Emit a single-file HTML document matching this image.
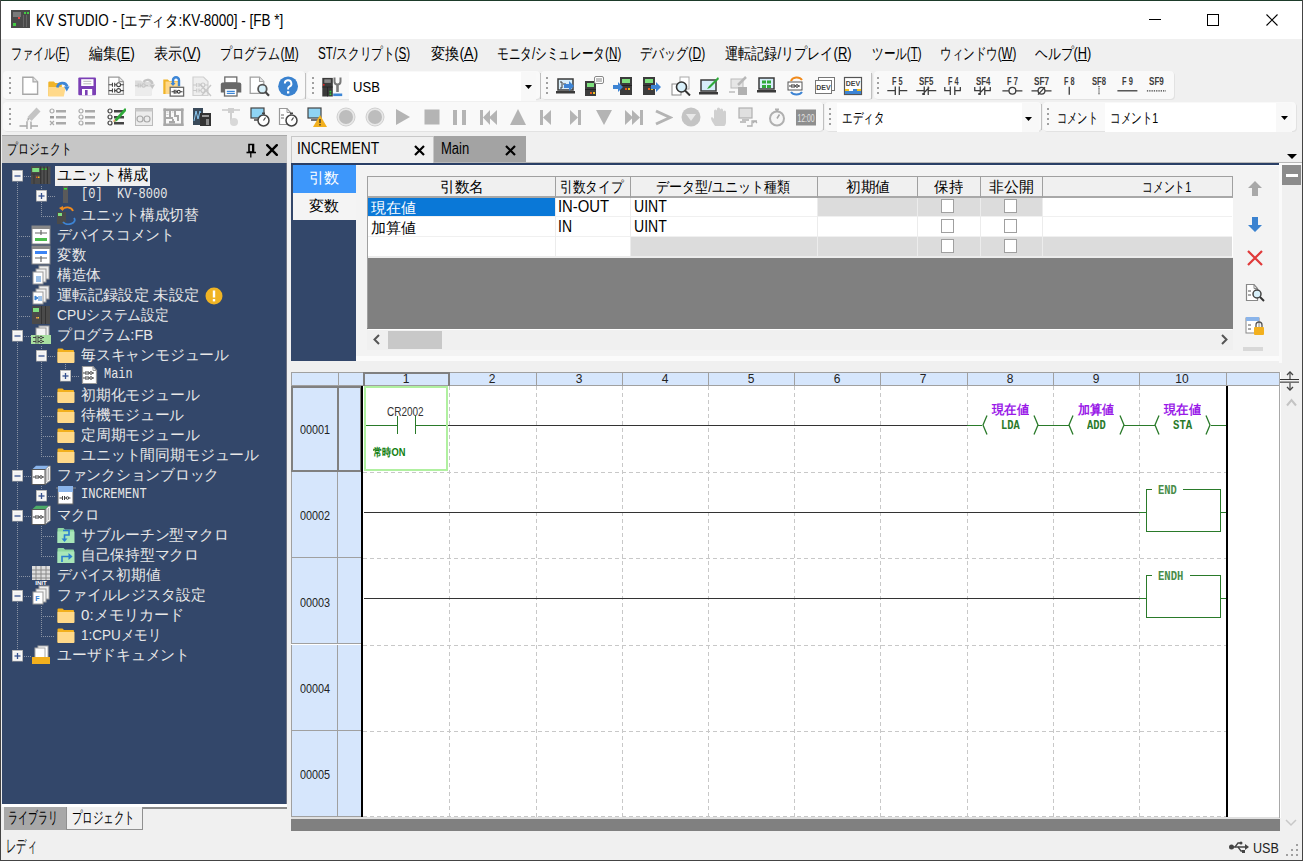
<!DOCTYPE html>
<html><head><meta charset="utf-8">
<style>
*{box-sizing:border-box;margin:0;padding:0}
html,body{width:1303px;height:861px;overflow:hidden;background:#f0f0f0;font-family:"Liberation Sans",sans-serif;color:#000}
.a{position:absolute}
.t{position:absolute;white-space:nowrap;line-height:1}
.ui{font-size:15px}
.tr{font-size:15px;color:#e6e6e6}
.m{font-family:"Liberation Mono",monospace}
</style></head><body>
<div class="a" style="left:1px;top:1px;width:1301px;height:38px;background:#fff"></div>
<svg class="a" style="left:11px;top:10px;" width="19" height="18" viewBox="0 0 19 18"><rect x="0" y="0" width="19" height="18" fill="#4a4a4a"/><rect x="2" y="2" width="8" height="5" fill="#7a7a7a"/><rect x="13" y="2" width="2" height="2" fill="#4c4"/><rect x="16" y="2" width="2" height="2" fill="#4c4"/><rect x="7" y="7" width="2" height="2" fill="#e44"/><rect x="2" y="13" width="3" height="3" fill="#4c4"/><rect x="12" y="5" width="1" height="12" fill="#666"/><rect x="15" y="5" width="1" height="12" fill="#666"/></svg>
<div class="t" id="f1" style="left:36px;top:12.5px;font-size:16px;color:#000;transform:scaleX(0.8430);transform-origin:0 0;">KV STUDIO - [エディタ:KV-8000] - [FB *]</div>
<div class="a" style="left:1149px;top:19px;width:12px;height:1px;background:#000"></div>
<div class="a" style="left:1207px;top:14px;width:12px;height:12px;border:1px solid #000"></div>
<svg class="a" style="left:1266px;top:14px;" width="12" height="12" viewBox="0 0 12 12"><path d="M0.5 0.5L11.5 11.5M11.5 0.5L0.5 11.5" stroke="#000" stroke-width="1.1"/></svg>
<div class="t" id="f2" style="left:11px;top:46px;font-size:16px;transform:scaleX(0.6905);transform-origin:0 0;">ファイル(<u>F</u>)</div>
<div class="t" id="f3" style="left:89px;top:46px;font-size:16px;transform:scaleX(0.8585);transform-origin:0 0;">編集(<u>E</u>)</div>
<div class="t" id="f4" style="left:154px;top:46px;font-size:16px;transform:scaleX(0.8792);transform-origin:0 0;">表示(<u>V</u>)</div>
<div class="t" id="f5" style="left:220px;top:46px;font-size:16px;transform:scaleX(0.7567);transform-origin:0 0;">プログラム(<u>M</u>)</div>
<div class="t" id="f6" style="left:318px;top:46px;font-size:16px;transform:scaleX(0.7302);transform-origin:0 0;">ST/スクリプト(<u>S</u>)</div>
<div class="t" id="f7" style="left:431px;top:46px;font-size:16px;transform:scaleX(0.8868);transform-origin:0 0;">変換(<u>A</u>)</div>
<div class="t" id="f8" style="left:497px;top:46px;font-size:16px;transform:scaleX(0.7281);transform-origin:0 0;">モニタ/シミュレータ(<u>N</u>)</div>
<div class="t" id="f9" style="left:640px;top:46px;font-size:16px;transform:scaleX(0.7558);transform-origin:0 0;">デバッグ(<u>D</u>)</div>
<div class="t" id="f10" style="left:725px;top:46px;font-size:16px;transform:scaleX(0.8194);transform-origin:0 0;">運転記録/リプレイ(<u>R</u>)</div>
<div class="t" id="f11" style="left:872px;top:46px;font-size:16px;transform:scaleX(0.7250);transform-origin:0 0;">ツール(<u>T</u>)</div>
<div class="t" id="f12" style="left:940px;top:46px;font-size:16px;transform:scaleX(0.7217);transform-origin:0 0;">ウィンドウ(<u>W</u>)</div>
<div class="t" id="f13" style="left:1035px;top:46px;font-size:16px;transform:scaleX(0.8000);transform-origin:0 0;">ヘルプ(<u>H</u>)</div>
<div class="a" style="left:3px;top:71px;width:302px;height:28px;background:#f9f9f9;border-radius:4px;box-shadow:1px 1px 0 #e2e2e2"></div>
<div class="a" style="left:9px;top:77px;width:2px;height:2px;background:#a0a0a0"></div>
<div class="a" style="left:9px;top:82px;width:2px;height:2px;background:#a0a0a0"></div>
<div class="a" style="left:9px;top:87px;width:2px;height:2px;background:#a0a0a0"></div>
<div class="a" style="left:9px;top:92px;width:2px;height:2px;background:#a0a0a0"></div>
<div class="a" style="left:307px;top:71px;width:233px;height:28px;background:#f9f9f9;border-radius:4px;box-shadow:1px 1px 0 #e2e2e2"></div>
<div class="a" style="left:312px;top:77px;width:2px;height:2px;background:#a0a0a0"></div>
<div class="a" style="left:312px;top:82px;width:2px;height:2px;background:#a0a0a0"></div>
<div class="a" style="left:312px;top:87px;width:2px;height:2px;background:#a0a0a0"></div>
<div class="a" style="left:312px;top:92px;width:2px;height:2px;background:#a0a0a0"></div>
<div class="a" style="left:541px;top:71px;width:331px;height:28px;background:#f9f9f9;border-radius:4px;box-shadow:1px 1px 0 #e2e2e2"></div>
<div class="a" style="left:546px;top:77px;width:2px;height:2px;background:#a0a0a0"></div>
<div class="a" style="left:546px;top:82px;width:2px;height:2px;background:#a0a0a0"></div>
<div class="a" style="left:546px;top:87px;width:2px;height:2px;background:#a0a0a0"></div>
<div class="a" style="left:546px;top:92px;width:2px;height:2px;background:#a0a0a0"></div>
<div class="a" style="left:874px;top:71px;width:300px;height:28px;background:#f9f9f9;border-radius:4px;box-shadow:1px 1px 0 #e2e2e2"></div>
<div class="a" style="left:877px;top:77px;width:2px;height:2px;background:#a0a0a0"></div>
<div class="a" style="left:877px;top:82px;width:2px;height:2px;background:#a0a0a0"></div>
<div class="a" style="left:877px;top:87px;width:2px;height:2px;background:#a0a0a0"></div>
<div class="a" style="left:877px;top:92px;width:2px;height:2px;background:#a0a0a0"></div>
<div class="a" style="left:3px;top:102px;width:820px;height:29px;background:#f9f9f9;border-radius:4px;box-shadow:1px 1px 0 #e2e2e2"></div>
<div class="a" style="left:9px;top:108px;width:2px;height:2px;background:#a0a0a0"></div>
<div class="a" style="left:9px;top:113px;width:2px;height:2px;background:#a0a0a0"></div>
<div class="a" style="left:9px;top:118px;width:2px;height:2px;background:#a0a0a0"></div>
<div class="a" style="left:9px;top:123px;width:2px;height:2px;background:#a0a0a0"></div>
<div class="a" style="left:825px;top:102px;width:216px;height:29px;background:#f9f9f9;border-radius:4px;box-shadow:1px 1px 0 #e2e2e2"></div>
<div class="a" style="left:829px;top:108px;width:2px;height:2px;background:#a0a0a0"></div>
<div class="a" style="left:829px;top:113px;width:2px;height:2px;background:#a0a0a0"></div>
<div class="a" style="left:829px;top:118px;width:2px;height:2px;background:#a0a0a0"></div>
<div class="a" style="left:829px;top:123px;width:2px;height:2px;background:#a0a0a0"></div>
<div class="a" style="left:1043px;top:102px;width:253px;height:29px;background:#f9f9f9;border-radius:4px;box-shadow:1px 1px 0 #e2e2e2"></div>
<div class="a" style="left:1047px;top:108px;width:2px;height:2px;background:#a0a0a0"></div>
<div class="a" style="left:1047px;top:113px;width:2px;height:2px;background:#a0a0a0"></div>
<div class="a" style="left:1047px;top:118px;width:2px;height:2px;background:#a0a0a0"></div>
<div class="a" style="left:1047px;top:123px;width:2px;height:2px;background:#a0a0a0"></div>
<div class="a" style="left:305px;top:73px;width:1px;height:26px;background:#c0c0c0"></div>
<div class="a" style="left:540px;top:73px;width:1px;height:26px;background:#c0c0c0"></div>
<div class="a" style="left:871px;top:73px;width:1px;height:26px;background:#c0c0c0"></div>
<div class="a" style="left:823px;top:104px;width:1px;height:26px;background:#c0c0c0"></div>
<div class="a" style="left:1041px;top:104px;width:1px;height:26px;background:#c0c0c0"></div>
<div class="a" style="left:349px;top:72px;width:187px;height:29px;background:#fff"></div>
<div class="a" style="left:521px;top:72px;width:15px;height:29px;background:#f8f8f8"></div>
<svg class="a" style="left:524.5px;top:85px;" width="7" height="4" viewBox="0 0 7 4"><path d="M0 0H7L3.5 4Z" fill="#000"/></svg>
<div class="t" id="f14" style="left:353px;top:79px;font-size:15px;transform:scaleX(0.8710);transform-origin:0 0;">USB</div>
<div class="a" style="left:837px;top:103px;width:202px;height:29px;background:#fff"></div>
<div class="a" style="left:1022px;top:103px;width:17px;height:29px;background:#f8f8f8"></div>
<svg class="a" style="left:1025px;top:117px;" width="7" height="4" viewBox="0 0 7 4"><path d="M0 0H7L3.5 4Z" fill="#000"/></svg>
<div class="t" id="f15" style="left:842px;top:110px;font-size:15px;transform:scaleX(0.7000);transform-origin:0 0;">エディタ</div>
<div class="t" id="f16" style="left:1057px;top:110px;font-size:15px;transform:scaleX(0.6833);transform-origin:0 0;">コメント</div>
<div class="a" style="left:1105px;top:103px;width:187px;height:29px;background:#fff"></div>
<div class="a" style="left:1276px;top:103px;width:16px;height:29px;background:#f8f8f8"></div>
<svg class="a" style="left:1280.5px;top:116px;" width="7" height="4" viewBox="0 0 7 4"><path d="M0 0H7L3.5 4Z" fill="#000"/></svg>
<div class="t" id="f17" style="left:1110px;top:110px;font-size:15px;transform:scaleX(0.7059);transform-origin:0 0;">コメント1</div>
<svg class="a" style="left:20px;top:76px;" width="22" height="21" viewBox="0 0 22 21"><path d="M2.8 1.2H13L17.6 5.8V18.2H2.8Z" fill="#fff" stroke="#a8a8a8" stroke-width="1.4"/><path d="M13 1.2V5.8H17.6" fill="#e4e4e4" stroke="#a8a8a8" stroke-width="1.2"/></svg>
<svg class="a" style="left:47px;top:76px;" width="24" height="22" viewBox="0 0 24 22"><path d="M1.3 6.5q0-1 1-1h4.5l1.5 1.5h6.5v13H1.3z" fill="#f0b429"/><path d="M1.3 11h17.5l-2 9.5H1.3z" fill="#ffd98a"/><path d="M10.3 11.5a5.2 5.2 0 0 1 10 -1" stroke="#3d86d6" stroke-width="2.6" fill="none"/><path d="M17 10.5h5.6l-2.8 5z" fill="#3d86d6"/></svg>
<svg class="a" style="left:77px;top:76px;" width="22" height="21" viewBox="0 0 22 21"><rect x="1.3" y="1.5" width="17.7" height="17.7" rx="1" fill="#7b3fb5"/><rect x="4.2" y="3.2" width="12.3" height="6.8" fill="#fff"/><path d="M6.3 5.3h8M6.3 7.8h8" stroke="#b8b8b8" stroke-width="1"/><rect x="5" y="13" width="10.2" height="6.2" fill="#fff"/><rect x="8" y="14" width="2.6" height="5.2" fill="#7b3fb5"/></svg>
<svg class="a" style="left:107px;top:76px;" width="22" height="21" viewBox="0 0 22 21"><path d="M1.7 1.2H12L16.4 5.6V18.3H1.7Z" fill="#fff" stroke="#9a9a9a" stroke-width="1.3"/><path d="M12 1.2V5.6H16.4" fill="#e8e8e8" stroke="#9a9a9a" stroke-width="1.1"/><path d="M1.7 8.7h3.75M5.45 6.699999999999999v4M7.7 6.699999999999999v4M7.7 8.7h1.7999999999999998M13.7 8.7h3.0" stroke="#444" stroke-width="1.1" fill="none"/><circle cx="11.6" cy="8.7" r="1.9500000000000002" stroke="#444" stroke-width="1.1" fill="none"/><path d="M1.7 14.6h3.75M5.45 12.6v4M7.7 12.6v4M7.7 14.6h1.7999999999999998M13.7 14.6h3.0" stroke="#444" stroke-width="1.1" fill="none"/><circle cx="11.6" cy="14.6" r="1.9500000000000002" stroke="#444" stroke-width="1.1" fill="none"/></svg>
<svg class="a" style="left:134px;top:76px;" width="22" height="21" viewBox="0 0 22 21"><path d="M1 4.5h6l1.5 1.5h9v13.5H1z" fill="#dcdcdc"/><path d="M1 11h18l-2 8.5H1z" fill="#ececec"/><path d="M1 9.5h3.25M4.25 7.5v4M6.2 7.5v4M6.2 9.5h1.56M11.4 9.5h2.6" stroke="#c4c4c4" stroke-width="1.1" fill="none"/><circle cx="9.58" cy="9.5" r="1.69" stroke="#c4c4c4" stroke-width="1.1" fill="none"/><path d="M9.5 6a5 5 0 0 1 9 2" stroke="#c4c4c4" stroke-width="2.4" fill="none"/><path d="M15.5 8.5h5.5l-2.7 4.5z" fill="#c4c4c4"/></svg>
<svg class="a" style="left:162px;top:76px;" width="23" height="21" viewBox="0 0 23 21"><path d="M1.3 3.5h4.5l1.5 1.5h10.5v13H1.3z" fill="#f0b429"/><path d="M3.5 5.5h14.5v12.5H3.5z" fill="#ffd98a"/><path d="M11 8.5V4.2a3 3 0 0 1 6 0v6" stroke="#3d86d6" stroke-width="2.4" fill="none"/><path d="M8.5 7l2.5 3 2.5-3z" fill="#3d86d6"/><rect x="8.2" y="11.3" width="13.4" height="8.8" fill="#fff" stroke="#6a6a6a" stroke-width="1.3"/><path d="M9.5 15.7h2.75M12.25 13.7v4M13.9 13.7v4M13.9 15.7h1.3199999999999998M18.3 15.7h2.2" stroke="#333" stroke-width="1.1" fill="none"/><circle cx="16.76" cy="15.7" r="1.4300000000000002" stroke="#333" stroke-width="1.1" fill="none"/></svg>
<svg class="a" style="left:192px;top:76px;" width="22" height="21" viewBox="0 0 22 21"><path d="M1 1H11.5L16 5.5V19.5H1Z" fill="#eeeeee" stroke="#d0d0d0" stroke-width="1.2"/><path d="M1 9h3.75M4.75 7v4M7.0 7v4M7.0 9h1.7999999999999998M13.0 9h3.0" stroke="#c8c8c8" stroke-width="1.1" fill="none"/><circle cx="10.9" cy="9" r="1.9500000000000002" stroke="#c8c8c8" stroke-width="1.1" fill="none"/><path d="M1 14.5h3.75M4.75 12.5v4M7.0 12.5v4M7.0 14.5h1.7999999999999998M13.0 14.5h3.0" stroke="#c8c8c8" stroke-width="1.1" fill="none"/><circle cx="10.9" cy="14.5" r="1.9500000000000002" stroke="#c8c8c8" stroke-width="1.1" fill="none"/><path d="M8 8l11 12M19 9l-9 10" stroke="#c8c8c8" stroke-width="1.4"/></svg>
<svg class="a" style="left:220px;top:76px;" width="23" height="21" viewBox="0 0 23 21"><rect x="4.8" y="1" width="12" height="6" fill="#fff" stroke="#6a6a6a" stroke-width="1.3"/><path d="M0.8 8.5q0-2 2-2h16.5q2 0 2 2V16.5H0.8z" fill="#686868"/><rect x="4.5" y="12.5" width="12.5" height="7.5" fill="#fff" stroke="#6a6a6a" stroke-width="1.3"/><path d="M6.8 15.3h8M6.8 17.3h8" stroke="#3d86d6" stroke-width="1.2"/></svg>
<svg class="a" style="left:249px;top:76px;" width="22" height="21" viewBox="0 0 22 21"><path d="M1.2 1.2H10.5L14.8 5.5V17.3H1.2Z" fill="#fff" stroke="#a0a0a0" stroke-width="1.3"/><path d="M10.5 1.2V5.5H14.8" fill="#e8e8e8" stroke="#a0a0a0" stroke-width="1.1"/><circle cx="13.4" cy="12.9" r="4.3" fill="#d6f0fa" stroke="#555" stroke-width="1.8"/><path d="M16.4 16l3.6 3.8" stroke="#444" stroke-width="2.2"/></svg>
<svg class="a" style="left:278px;top:76px;" width="21" height="21" viewBox="0 0 21 21"><circle cx="10.1" cy="10.3" r="9.9" fill="#3a82cf"/><path d="M6.8 7.6a3.3 3.3 0 1 1 4.6 3c-1 .5-1.3 1-1.3 2.2v.8" stroke="#fff" stroke-width="1.9" fill="none"/><rect x="9" y="15.2" width="2.3" height="2.3" fill="#fff"/></svg>
<svg class="a" style="left:322px;top:76px;" width="22" height="21" viewBox="0 0 22 21"><rect x="0.3" y="1.9" width="10.5" height="18.6" fill="#3a3a3a"/><rect x="2.3" y="3.3" width="6.5" height="3.6" fill="#8a8a8a"/><rect x="1" y="8" width="1.6" height="1.6" fill="#e02020"/><path d="M0.3 11h10.5M5.5 11v9.5" stroke="#222" stroke-width="0.8"/><rect x="7.5" y="14.8" width="1.8" height="1.6" fill="#3c3"/><rect x="7.5" y="17.5" width="1.8" height="1.6" fill="#3c3"/><path d="M12.5 1.5v4a3 3 0 0 0 6 0v-4" stroke="#7a7a7a" stroke-width="2" fill="none"/><path d="M15.5 8v8" stroke="#7a7a7a" stroke-width="2.6"/><rect x="11.2" y="17.5" width="9" height="2.6" fill="#3d86d6"/></svg>
<svg class="a" style="left:556px;top:76px;" width="20" height="20" viewBox="0 0 20 20"><rect x="2" y="3" width="15" height="11" fill="#d7eefa" stroke="#3a3a3a" stroke-width="1.5"/><rect x="0" y="15" width="19" height="2.5" fill="#3a3a3a"/><path d="M4 6h2v6H4M7 8h3" stroke="#3a3a3a" stroke-width="1" fill="none"/><path d="M8 8h5v-3l5 5-5 5v-3h-5z" fill="#3d84d4"/></svg>
<svg class="a" style="left:584px;top:76px;" width="20" height="20" viewBox="0 0 20 20"><rect x="1" y="5" width="11" height="15" fill="#3c3c3c"/><rect x="3" y="7" width="7" height="4" fill="#7ee07e"/><rect x="6" y="16" width="2" height="2" fill="#e85a1c"/><rect x="9" y="16" width="2" height="2" fill="#f0c020"/><rect x="1" y="13" width="11" height="1" fill="#222"/><rect x="10.5" y="0.5" width="9" height="7" rx="1.5" fill="#fff" stroke="#888"/><path d="M12 3h6M12 5h6" stroke="#888"/></svg>
<svg class="a" style="left:613px;top:76px;" width="20" height="20" viewBox="0 0 20 20"><rect x="7" y="1" width="12" height="18" fill="#3c3c3c"/><rect x="9" y="3" width="8" height="4" fill="#7ee07e"/><rect x="12" y="12" width="2" height="2" fill="#e85a1c"/><rect x="15" y="12" width="2" height="2" fill="#f0c020"/><rect x="7" y="9" width="12" height="1" fill="#222"/><path d="M0 9h5v-3l5 5-5 5v-3h-5z" fill="#3d84d4"/></svg>
<svg class="a" style="left:642px;top:76px;" width="20" height="20" viewBox="0 0 20 20"><rect x="1" y="1" width="12" height="18" fill="#3c3c3c"/><rect x="3" y="3" width="8" height="4" fill="#7ee07e"/><rect x="6" y="12" width="2" height="2" fill="#e85a1c"/><rect x="9" y="12" width="2" height="2" fill="#f0c020"/><rect x="1" y="9" width="12" height="1" fill="#222"/><path d="M9 9h5v-3l5 5-5 5v-3h-5z" fill="#3d84d4"/></svg>
<svg class="a" style="left:671px;top:76px;" width="20" height="20" viewBox="0 0 20 20"><rect x="9" y="1" width="9" height="12" fill="#fff" stroke="#aaa"/><rect x="1" y="8" width="9" height="11" fill="#fff" stroke="#888"/><circle cx="10.5" cy="11" r="5" fill="#d8f0fa" stroke="#333" stroke-width="1.6"/><path d="M14 14.5l5 5" stroke="#333" stroke-width="2"/></svg>
<svg class="a" style="left:699px;top:76px;" width="20" height="20" viewBox="0 0 20 20"><rect x="2" y="4" width="15" height="11" fill="#d7eefa" stroke="#3a3a3a" stroke-width="1.5"/><rect x="0" y="16" width="19" height="2.5" fill="#3a3a3a"/><path d="M19 1l-9 9-2 3 3-1 9-9z" fill="#2faa3a"/></svg>
<svg class="a" style="left:728px;top:76px;" width="20" height="20" viewBox="0 0 20 20"><rect x="3" y="3" width="12" height="9" fill="#e6e6e6" stroke="#bbb"/><rect x="10" y="11" width="9" height="8" fill="#b0b0b0"/><path d="M18 1l-8 8" stroke="#b8b8b8" stroke-width="2.5"/><path d="M1 16h6" stroke="#bbb" stroke-width="1.5"/></svg>
<svg class="a" style="left:757px;top:76px;" width="20" height="20" viewBox="0 0 20 20"><rect x="2" y="2" width="15" height="11" fill="#d7eefa" stroke="#3a3a3a" stroke-width="1.5"/><rect x="0" y="14" width="19" height="2.5" fill="#3a3a3a"/><rect x="5" y="4.5" width="4" height="3" fill="#2faa3a"/><rect x="10" y="4.5" width="4" height="3" fill="#2faa3a"/><rect x="5" y="9" width="4" height="3" fill="#2faa3a"/><rect x="10" y="9" width="4" height="3" fill="#2faa3a"/></svg>
<svg class="a" style="left:786px;top:76px;" width="20" height="20" viewBox="0 0 20 20"><rect x="2" y="6" width="14" height="8" fill="#fff" stroke="#555"/><path d="M3 10h3M6 8v4M8 8v4M8 10h2M12 10h2" stroke="#333" stroke-width="1" fill="none"/><circle cx="11" cy="10" r="1.3" stroke="#333" fill="none"/><path d="M5 5a6 5 0 0 1 11 -1" stroke="#f08a1c" stroke-width="2" fill="none"/><path d="M5 16a6 4 0 0 0 11 0" stroke="#3d84d4" stroke-width="2" fill="none"/></svg>
<svg class="a" style="left:815px;top:76px;" width="20" height="20" viewBox="0 0 20 20"><rect x="3.5" y="1.5" width="16" height="13" fill="#fff" stroke="#777"/><rect x="0.5" y="4.5" width="16" height="13" fill="#fff" stroke="#777"/><text x="8.5" y="14" font-size="7" text-anchor="middle" fill="#444" font-weight="bold" font-family="Liberation Sans">DEV</text></svg>
<svg class="a" style="left:843px;top:76px;" width="20" height="20" viewBox="0 0 20 20"><rect x="1.5" y="1.5" width="17" height="17" fill="#fff" stroke="#555" stroke-width="1.2"/><text x="10" y="10" font-size="7" text-anchor="middle" fill="#444" font-weight="bold" font-family="Liberation Sans">DEV</text><path d="M2 13h4v2h4v-2h4v2h4v3H2z" fill="#3d84d4"/><path d="M2 13h4v2H2zM14 13h4v2h-4z" fill="#f2c01e"/></svg>
<svg class="a" style="left:880px;top:76px;" width="34" height="20" viewBox="0 0 34 20"><text x="12" y="8.8" font-size="11.5" font-weight="bold" fill="#3c3c3c" font-family="Liberation Sans" textLength="10.6" lengthAdjust="spacingAndGlyphs">F 5</text><path d="M7.300000000000001 14.7h8M15.3 10.6v8.4M19.3 10.6v8.4M19.3 14.7h8" stroke="#3c3c3c" stroke-width="1.3" fill="none"/></svg>
<svg class="a" style="left:907px;top:76px;" width="34" height="20" viewBox="0 0 34 20"><text x="12" y="8.8" font-size="11.5" font-weight="bold" fill="#3c3c3c" font-family="Liberation Sans" textLength="14.5" lengthAdjust="spacingAndGlyphs">SF5</text><path d="M9.25 14.7h8M17.25 10.6v8.4M21.25 10.6v8.4M21.25 14.7h8M15.25 18.5l7-7" stroke="#3c3c3c" stroke-width="1.3" fill="none"/></svg>
<svg class="a" style="left:936px;top:76px;" width="34" height="20" viewBox="0 0 34 20"><text x="12" y="8.8" font-size="11.5" font-weight="bold" fill="#3c3c3c" font-family="Liberation Sans" textLength="10.6" lengthAdjust="spacingAndGlyphs">F 4</text><path d="M8.8 11v3.7h5.5M14.3 10.6v8.4M18.8 10.6v8.4M18.8 14.7h5.5v-3.7" stroke="#3c3c3c" stroke-width="1.3" fill="none"/></svg>
<svg class="a" style="left:964px;top:76px;" width="34" height="20" viewBox="0 0 34 20"><text x="12" y="8.8" font-size="11.5" font-weight="bold" fill="#3c3c3c" font-family="Liberation Sans" textLength="14.5" lengthAdjust="spacingAndGlyphs">SF4</text><path d="M10.75 11v3.7h5.5M16.25 10.6v8.4M20.75 10.6v8.4M20.75 14.7h5.5v-3.7M14.25 18.5l7-7" stroke="#3c3c3c" stroke-width="1.3" fill="none"/></svg>
<svg class="a" style="left:995px;top:76px;" width="34" height="20" viewBox="0 0 34 20"><text x="12" y="8.8" font-size="11.5" font-weight="bold" fill="#3c3c3c" font-family="Liberation Sans" textLength="10.8" lengthAdjust="spacingAndGlyphs">F 7</text><path d="M7.399999999999999 14.8h6.5M20.9 14.8h6.5" stroke="#3c3c3c" stroke-width="1.3" fill="none"/><circle cx="17.4" cy="14.8" r="3.4" stroke="#3c3c3c" stroke-width="1.3" fill="none"/></svg>
<svg class="a" style="left:1022px;top:76px;" width="34" height="20" viewBox="0 0 34 20"><text x="12" y="8.8" font-size="11.5" font-weight="bold" fill="#3c3c3c" font-family="Liberation Sans" textLength="15" lengthAdjust="spacingAndGlyphs">SF7</text><path d="M9.5 14.8h6.5M23.0 14.8h6.5M16.0 18.6l7-7.5" stroke="#3c3c3c" stroke-width="1.3" fill="none"/><circle cx="19.5" cy="14.8" r="3.4" stroke="#3c3c3c" stroke-width="1.3" fill="none"/></svg>
<svg class="a" style="left:1052px;top:76px;" width="34" height="20" viewBox="0 0 34 20"><text x="12" y="8.8" font-size="11.5" font-weight="bold" fill="#3c3c3c" font-family="Liberation Sans" textLength="10.5" lengthAdjust="spacingAndGlyphs">F 8</text><path d="M17.25 10.8v8" stroke="#3c3c3c" stroke-width="1.3" fill="none"/></svg>
<svg class="a" style="left:1080px;top:76px;" width="34" height="20" viewBox="0 0 34 20"><text x="12" y="8.8" font-size="11.5" font-weight="bold" fill="#3c3c3c" font-family="Liberation Sans" textLength="14" lengthAdjust="spacingAndGlyphs">SF8</text><path d="M19.0 10v9" stroke="#3c3c3c" stroke-width="1.3" stroke-dasharray="1.2 1"/></svg>
<svg class="a" style="left:1110px;top:76px;" width="34" height="20" viewBox="0 0 34 20"><text x="12" y="8.8" font-size="11.5" font-weight="bold" fill="#3c3c3c" font-family="Liberation Sans" textLength="10.8" lengthAdjust="spacingAndGlyphs">F 9</text><path d="M7.399999999999999 14.8h20" stroke="#3c3c3c" stroke-width="1.3" fill="none"/></svg>
<svg class="a" style="left:1137px;top:76px;" width="34" height="20" viewBox="0 0 34 20"><text x="12" y="8.8" font-size="11.5" font-weight="bold" fill="#3c3c3c" font-family="Liberation Sans" textLength="14.8" lengthAdjust="spacingAndGlyphs">SF9</text><path d="M9.899999999999999 14.8h19" stroke="#3c3c3c" stroke-width="1.3" stroke-dasharray="1.3 1"/></svg>
<svg class="a" style="left:18px;top:106px;" width="23" height="23" viewBox="0 0 23 23"><path d="M20.5 3.5l-9 9.5" stroke="#c4c4c4" stroke-width="5.5" stroke-linecap="butt"/><path d="M11.8 12.8l-3.3 3.6 1.2-4.6z" fill="#a8a8a8"/><path d="M8.5 13l3 3" stroke="#e8e8e8" stroke-width="1"/><path d="M1.5 20h7.5M9 15.5v9M13 15.5v9M13 20h7" stroke="#a8a8a8" stroke-width="1.4"/></svg>
<svg class="a" style="left:48px;top:107px;" width="20" height="20" viewBox="0 0 20 20"><circle cx="4" cy="4" r="2" fill="none" stroke="#aaa" stroke-width="1.2"/><rect x="8" y="3" width="10" height="2.5" fill="#aaa"/><rect x="2" y="9" width="4" height="2.5" fill="#999"/><rect x="8" y="9" width="10" height="2.5" fill="#aaa"/><path d="M2 14l4 4M6 14l-4 4" stroke="#aaa" stroke-width="1.2"/><rect x="8" y="15" width="10" height="2.5" fill="#aaa"/></svg>
<svg class="a" style="left:77px;top:107px;" width="20" height="20" viewBox="0 0 20 20"><circle cx="4" cy="4" r="2" fill="none" stroke="#aaa" stroke-width="1.2"/><rect x="8" y="3" width="10" height="2.5" fill="#aaa"/><circle cx="4" cy="10" r="2" fill="none" stroke="#aaa" stroke-width="1.2"/><rect x="8" y="9" width="10" height="2.5" fill="#aaa"/><circle cx="4" cy="16" r="2" fill="none" stroke="#aaa" stroke-width="1.2"/><rect x="8" y="15" width="10" height="2.5" fill="#aaa"/></svg>
<svg class="a" style="left:106px;top:107px;" width="20" height="20" viewBox="0 0 20 20"><circle cx="4" cy="4" r="2" fill="none" stroke="#444" stroke-width="1.2"/><rect x="8" y="3" width="10" height="2.5" fill="#444"/><circle cx="4" cy="10" r="2" fill="none" stroke="#444" stroke-width="1.2"/><rect x="8" y="9" width="10" height="2.5" fill="#444"/><circle cx="4" cy="16" r="2" fill="none" stroke="#444" stroke-width="1.2"/><rect x="8" y="15" width="10" height="2.5" fill="#444"/><path d="M19 1l2 2-10 11-3 1 1-3z" fill="#2faa3a"/><path d="M8 12l-1 3 3-1z" fill="#e8a070"/></svg>
<svg class="a" style="left:134px;top:107px;" width="20" height="20" viewBox="0 0 20 20"><rect x="1.5" y="1.5" width="17" height="17" fill="#ececec" stroke="#bbb"/><rect x="1.5" y="1.5" width="17" height="3" fill="#c8c8c8"/><circle cx="6" cy="12" r="3" fill="none" stroke="#aaa" stroke-width="1.2"/><circle cx="13" cy="12" r="3" fill="none" stroke="#aaa" stroke-width="1.2"/></svg>
<svg class="a" style="left:163px;top:108px;" width="22" height="20" viewBox="0 0 22 20"><g fill="#a8a8a8"><rect x="0.5" y="0.5" width="20" height="2.5"/><rect x="0.5" y="15.5" width="20" height="2.5"/><rect x="0.5" y="0.5" width="2.5" height="17.5"/><rect x="18" y="0.5" width="2.5" height="17.5"/><rect x="6" y="3" width="2" height="6"/><rect x="11" y="3" width="2" height="4"/><rect x="3" y="9" width="7" height="2"/><rect x="11" y="7" width="5" height="2"/><rect x="14" y="9" width="2" height="4"/><rect x="6" y="13" width="6" height="2.5"/><rect x="9" y="11" width="2" height="2"/></g><path d="M3.5 4h2M3.5 6.5h2M9 4h1.5" stroke="#c8c8c8"/></svg>
<svg class="a" style="left:192px;top:107px;" width="20" height="20" viewBox="0 0 20 20"><rect x="1" y="1" width="10" height="17" fill="#3a4a5a"/><path d="M2 14l2-10 2 8 2-8 2 10" stroke="#8ac8f0" fill="none"/><rect x="8" y="6" width="11" height="13" fill="#333"/><rect x="10" y="8" width="7" height="2" fill="#999"/><rect x="14" y="12" width="3" height="6" fill="#888"/></svg>
<svg class="a" style="left:221px;top:107px;" width="20" height="20" viewBox="0 0 20 20"><path d="M1 3h18" stroke="#c8c8c8" stroke-width="1.5"/><rect x="7" y="1" width="6" height="5" fill="#d0d0d0"/><path d="M10 6v8" stroke="#d0d0d0" stroke-width="2"/><circle cx="13" cy="15" r="4" fill="#d8d8d8"/></svg>
<svg class="a" style="left:250px;top:107px;" width="20" height="20" viewBox="0 0 20 20"><rect x="1" y="1" width="13" height="10" fill="#8fd4f4" stroke="#444" stroke-width="1.2"/><path d="M4 13h7" stroke="#444" stroke-width="1.5"/><circle cx="13.5" cy="13.5" r="5.5" fill="#fff" stroke="#444" stroke-width="1.5"/><rect x="12.0" y="5.5" width="3" height="1.5" fill="#444"/><path d="M13.5 13.5l2-3" stroke="#444" stroke-width="1.2"/></svg>
<svg class="a" style="left:278px;top:107px;" width="20" height="20" viewBox="0 0 20 20"><path d="M1.5 1.5H9L12.5 5.5V17.5H1.5Z" fill="#fff" stroke="#999" stroke-width="1.2"/><path d="M9 1.5V5.5H12.5" fill="none" stroke="#999" stroke-width="1"/><path d="M3 8h3M3 11h3" stroke="#666"/><circle cx="13.5" cy="13.5" r="5.5" fill="#fff" stroke="#444" stroke-width="1.5"/><rect x="12.0" y="5.5" width="3" height="1.5" fill="#444"/><path d="M13.5 13.5l2-3" stroke="#444" stroke-width="1.2"/></svg>
<svg class="a" style="left:307px;top:107px;" width="20" height="20" viewBox="0 0 20 20"><rect x="1" y="1" width="13" height="10" fill="#8fd4f4" stroke="#444" stroke-width="1.2"/><path d="M4 13h7" stroke="#444" stroke-width="1.5"/><path d="M13 8l7 12H6z" fill="#f2b01e"/><path d="M13 12v4M13 17v1.5" stroke="#333" stroke-width="1.3"/></svg>
<svg class="a" style="left:336px;top:107px;" width="20" height="20" viewBox="0 0 20 20"><circle cx="10" cy="10" r="9" fill="#e8e8e8" stroke="#d0d0d0"/><circle cx="10" cy="10" r="7" fill="#bdbdbd"/></svg>
<svg class="a" style="left:365px;top:107px;" width="20" height="20" viewBox="0 0 20 20"><circle cx="10" cy="10" r="9" fill="#e8e8e8" stroke="#d0d0d0"/><circle cx="10" cy="10" r="7" fill="#bdbdbd"/></svg>
<svg class="a" style="left:393px;top:107px;" width="20" height="20" viewBox="0 0 20 20"><path d="M3 2L17 10L3 18Z" fill="#b4b4b4"/></svg>
<svg class="a" style="left:422px;top:107px;" width="20" height="20" viewBox="0 0 20 20"><rect x="2.5" y="2.5" width="15" height="15" fill="#b4b4b4"/></svg>
<svg class="a" style="left:450px;top:107px;" width="20" height="20" viewBox="0 0 20 20"><rect x="3" y="3" width="4" height="15" fill="#b4b4b4"/><rect x="12" y="3" width="4" height="15" fill="#b4b4b4"/></svg>
<svg class="a" style="left:479px;top:107px;" width="20" height="20" viewBox="0 0 20 20"><rect x="1" y="3" width="3" height="15" fill="#b4b4b4"/><path d="M4 10.5L11 3v15zM10 10.5L18 3v15z" fill="#b4b4b4"/></svg>
<svg class="a" style="left:508px;top:107px;" width="20" height="20" viewBox="0 0 20 20"><path d="M10 2L18 18H2Z" fill="#b4b4b4"/></svg>
<svg class="a" style="left:536px;top:107px;" width="20" height="20" viewBox="0 0 20 20"><rect x="4" y="3" width="3" height="15" fill="#b4b4b4"/><path d="M7 10.5L15 3v15z" fill="#b4b4b4"/></svg>
<svg class="a" style="left:565px;top:107px;" width="20" height="20" viewBox="0 0 20 20"><rect x="13" y="3" width="3" height="15" fill="#b4b4b4"/><path d="M13 10.5L5 3v15z" fill="#b4b4b4"/></svg>
<svg class="a" style="left:594px;top:107px;" width="20" height="20" viewBox="0 0 20 20"><path d="M2 3H18L10 18Z" fill="#b4b4b4"/></svg>
<svg class="a" style="left:624px;top:107px;" width="20" height="20" viewBox="0 0 20 20"><rect x="16" y="3" width="3" height="15" fill="#b4b4b4"/><path d="M16 10.5L8 3v15zM9 10.5L1 3v15z" fill="#b4b4b4"/></svg>
<svg class="a" style="left:653px;top:107px;" width="20" height="20" viewBox="0 0 20 20"><path d="M3 4l14 6.5L3 17" fill="none" stroke="#b4b4b4" stroke-width="3"/></svg>
<svg class="a" style="left:681px;top:107px;" width="20" height="20" viewBox="0 0 20 20"><circle cx="10" cy="10" r="9.5" fill="#c4c4c4"/><path d="M5 7h10l-5 7z" fill="#e8e8e8"/></svg>
<svg class="a" style="left:710px;top:107px;" width="20" height="20" viewBox="0 0 20 20"><path d="M5 19c-2-3-4-6-4-8 0-1 2-1 3 1V4a1.5 1.5 0 0 1 3 0v5V2a1.5 1.5 0 0 1 3 0v7V3a1.5 1.5 0 0 1 3 0v6V5a1.5 1.5 0 0 1 3 0v10c0 2-1 4-2 4z" fill="#d0d0d0"/></svg>
<svg class="a" style="left:738px;top:107px;" width="20" height="20" viewBox="0 0 20 20"><rect x="1" y="1" width="13" height="10" fill="#e0e0e0" stroke="#b0b0b0" stroke-width="1.2"/><path d="M4 13h7M2 15h6" stroke="#b0b0b0" stroke-width="1.5"/><path d="M9 19h5v-5h5M15 16l2-2 2 2" stroke="#b0b0b0" stroke-width="1.3" fill="none"/></svg>
<svg class="a" style="left:767px;top:107px;" width="20" height="20" viewBox="0 0 20 20"><circle cx="10" cy="11.5" r="7" fill="#f6f6f6" stroke="#b0b0b0" stroke-width="2"/><rect x="8" y="1.5" width="4" height="2" fill="#b0b0b0"/><path d="M10 3v2M10 11.5l2.5-4" stroke="#a8a8a8" stroke-width="1.6"/></svg>
<svg class="a" style="left:796px;top:107px;" width="20" height="20" viewBox="0 0 20 20"><rect x="0" y="2.5" width="20" height="16" fill="#8e8e8e"/><text x="1.5" y="14.5" font-size="11" fill="#e4e4e4" font-family="Liberation Sans" textLength="17" lengthAdjust="spacingAndGlyphs">12:00</text></svg>
<div class="a" style="left:2px;top:135px;width:285px;height:28px;background:#c6c6c6;border-top:1px solid #a8a8a8"></div>
<div class="t" id="f18" style="left:7px;top:141px;font-size:15px;transform:scaleX(0.7222);transform-origin:0 0;">プロジェクト</div>
<svg class="a" style="left:245px;top:143px;" width="12" height="15" viewBox="0 0 12 15"><path d="M4 1.5h4.5v7.5H4z" fill="none" stroke="#000" stroke-width="1.6"/><path d="M1.5 9.5h9.5" stroke="#000" stroke-width="1.6"/><path d="M5.8 10v4.5" stroke="#000" stroke-width="1.3"/><path d="M7.5 2v7" stroke="#000" stroke-width="1"/></svg>
<svg class="a" style="left:265.5px;top:144px;" width="12" height="12" viewBox="0 0 12 12"><path d="M1.2 1.2L10.8 10.8M10.8 1.2L1.2 10.8" stroke="#000" stroke-width="2.4" stroke-linecap="round"/></svg>
<div class="a" style="left:2px;top:163px;width:284px;height:641px;background:#33476a"></div>
<div class="a" style="left:286px;top:163px;width:1px;height:641px;background:#6c7282"></div>
<div class="a" style="left:17px;top:182px;width:1px;height:469px;background:repeating-linear-gradient(to bottom,#8a93a3 0 1px,transparent 1px 2px)"></div>
<div class="a" style="left:41px;top:186px;width:1px;height:30px;background:repeating-linear-gradient(to bottom,#8a93a3 0 1px,transparent 1px 2px)"></div>
<div class="a" style="left:41px;top:346px;width:1px;height:110px;background:repeating-linear-gradient(to bottom,#8a93a3 0 1px,transparent 1px 2px)"></div>
<div class="a" style="left:65px;top:362px;width:1px;height:9px;background:repeating-linear-gradient(to bottom,#8a93a3 0 1px,transparent 1px 2px)"></div>
<div class="a" style="left:41px;top:482px;width:1px;height:9px;background:repeating-linear-gradient(to bottom,#8a93a3 0 1px,transparent 1px 2px)"></div>
<div class="a" style="left:41px;top:526px;width:1px;height:30px;background:repeating-linear-gradient(to bottom,#8a93a3 0 1px,transparent 1px 2px)"></div>
<div class="a" style="left:41px;top:606px;width:1px;height:30px;background:repeating-linear-gradient(to bottom,#8a93a3 0 1px,transparent 1px 2px)"></div>
<svg class="a" style="left:12px;top:170px;" width="12" height="12" viewBox="0 0 12 12"><rect x="0.5" y="0.5" width="10" height="10.5" fill="#f2f2f2" stroke="#a8a8a8"/><rect x="1.2" y="1.2" width="8.6" height="9" fill="none" stroke="#fff" stroke-width="0.8"/><path d="M2.5 6h6" stroke="#34508e" stroke-width="1.3"/></svg>
<div class="a" style="left:24px;top:176px;width:7px;height:1px;background:repeating-linear-gradient(to right,#8a93a3 0 1px,transparent 1px 2px)"></div>
<svg class="a" style="left:31px;top:165px;" width="20" height="20" viewBox="0 0 20 20"><rect x="0" y="1.5" width="19.5" height="17.5" fill="#505050"/><rect x="0" y="1.5" width="9.5" height="17.5" fill="#4a4a4a"/><rect x="1.2" y="3" width="7" height="4" fill="#80e080"/><path d="M0 9h9.5M3 9v10" stroke="#333" stroke-width="0.8"/><rect x="5" y="11.5" width="1.5" height="1.5" fill="#e85c1c"/><rect x="7" y="11.5" width="1.5" height="1.5" fill="#f0c020"/><path d="M9.8 1.5v17.5M13 1.5v17.5M16.3 1.5v17.5" stroke="#2a2a2a" stroke-width="0.9"/><rect x="10.5" y="3.5" width="2" height="1.2" fill="#3e3"/><rect x="13.8" y="3.5" width="2" height="1.2" fill="#3e3"/></svg>
<div class="a" style="left:55px;top:166px;width:95px;height:20px;background:#f0f0f0"></div>
<div class="t" id="f19" style="left:57px;top:167px;font-size:15px;color:#000;transform:scaleX(1.0111);transform-origin:0 0;">ユニット構成</div>
<svg class="a" style="left:36px;top:190px;" width="12" height="12" viewBox="0 0 12 12"><rect x="0.5" y="0.5" width="10" height="10.5" fill="#f2f2f2" stroke="#a8a8a8"/><rect x="1.2" y="1.2" width="8.6" height="9" fill="none" stroke="#fff" stroke-width="0.8"/><path d="M2.5 6h6" stroke="#34508e" stroke-width="1.3"/><path d="M5.5 3v6" stroke="#34508e" stroke-width="1.3"/></svg>
<div class="a" style="left:48px;top:196px;width:7px;height:1px;background:repeating-linear-gradient(to right,#8a93a3 0 1px,transparent 1px 2px)"></div>
<svg class="a" style="left:56px;top:185px;" width="20" height="20" viewBox="0 0 20 20"><rect x="7" y="1" width="5" height="17" fill="#5a5a5a"/><rect x="8" y="3" width="3" height="1.5" fill="#3e3"/></svg>
<div class="t" id="f20" style="left:81px;top:187px;font-size:15px;color:#e8e8e8;font-family:Liberation Mono;transform:scaleX(0.8000);transform-origin:0 0;">[0]&nbsp;&nbsp;KV-8000</div>
<div class="a" style="left:41px;top:216px;width:14px;height:1px;background:repeating-linear-gradient(to right,#8a93a3 0 1px,transparent 1px 2px)"></div>
<svg class="a" style="left:56px;top:205px;" width="20" height="20" viewBox="0 0 20 20"><rect x="1" y="7" width="9" height="12" fill="#4a4a4a"/><rect x="2" y="8" width="4" height="3" fill="#80e080"/><path d="M6 5a6 5 0 0 1 11 1" stroke="#f08a1c" stroke-width="1.8" fill="none"/><path d="M3 3l4-2v5z" fill="#f08a1c"/><path d="M7 17a6 4 0 0 0 11-4" stroke="#3d84d4" stroke-width="1.8" fill="none"/></svg>
<div class="t" id="f21" style="left:81px;top:207px;font-size:15px;color:#e8e8e8;transform:scaleX(0.9833);transform-origin:0 0;">ユニット構成切替</div>
<div class="a" style="left:17px;top:236px;width:14px;height:1px;background:repeating-linear-gradient(to right,#8a93a3 0 1px,transparent 1px 2px)"></div>
<svg class="a" style="left:31px;top:225px;" width="20" height="20" viewBox="0 0 20 20"><rect x="1" y="1" width="18" height="18" fill="#fff" stroke="#888"/><rect x="1" y="1" width="18" height="3" fill="#888"/><path d="M4 8h12M10 5v5" stroke="#666" stroke-width="1.2"/><rect x="4" y="13" width="12" height="3" fill="#4cbc4c"/></svg>
<div class="t" id="f22" style="left:57px;top:227px;font-size:15px;color:#e8e8e8;transform:scaleX(0.9800);transform-origin:0 0;">デバイスコメント</div>
<div class="a" style="left:17px;top:256px;width:14px;height:1px;background:repeating-linear-gradient(to right,#8a93a3 0 1px,transparent 1px 2px)"></div>
<svg class="a" style="left:31px;top:245px;" width="20" height="20" viewBox="0 0 20 20"><rect x="1" y="1" width="18" height="18" fill="#fff" stroke="#888"/><rect x="1" y="1" width="18" height="3" fill="#888"/><rect x="4" y="6" width="12" height="3" fill="#3d84f4"/><path d="M4 13h12M10 11v6" stroke="#666" stroke-width="1.2"/></svg>
<div class="t" id="f23" style="left:57px;top:247px;font-size:15px;color:#e8e8e8;transform:scaleX(0.9667);transform-origin:0 0;">変数</div>
<div class="a" style="left:17px;top:276px;width:14px;height:1px;background:repeating-linear-gradient(to right,#8a93a3 0 1px,transparent 1px 2px)"></div>
<svg class="a" style="left:31px;top:265px;" width="20" height="20" viewBox="0 0 20 20"><rect x="8" y="1" width="10" height="13" fill="#eee" stroke="#999"/><rect x="5" y="4" width="10" height="13" fill="#f4f4f4" stroke="#999"/><rect x="2" y="7" width="10" height="12" fill="#fff" stroke="#999"/><path d="M5 12h5M5 14h5M5 16h5" stroke="#3d84d4"/></svg>
<div class="t" id="f24" style="left:57px;top:267px;font-size:15px;color:#e8e8e8;transform:scaleX(0.9778);transform-origin:0 0;">構造体</div>
<div class="a" style="left:17px;top:296px;width:14px;height:1px;background:repeating-linear-gradient(to right,#8a93a3 0 1px,transparent 1px 2px)"></div>
<svg class="a" style="left:31px;top:285px;" width="20" height="20" viewBox="0 0 20 20"><rect x="8" y="1" width="10" height="13" fill="#eee" stroke="#999"/><rect x="5" y="4" width="10" height="13" fill="#f4f4f4" stroke="#999"/><rect x="2" y="7" width="10" height="12" fill="#fff" stroke="#999"/><path d="M4 11l3 2-3 2zM8 11v5M10 11v5" stroke="#3d84d4" fill="#3d84d4"/></svg>
<div class="t" id="f25" style="left:57px;top:287px;font-size:15px;color:#e8e8e8;transform:scaleX(1.0216);transform-origin:0 0;">運転記録設定 未設定</div>
<div class="a" style="left:17px;top:316px;width:14px;height:1px;background:repeating-linear-gradient(to right,#8a93a3 0 1px,transparent 1px 2px)"></div>
<svg class="a" style="left:31px;top:305px;" width="20" height="20" viewBox="0 0 20 20"><rect x="1" y="1" width="18" height="18" fill="#4a4a4a"/><rect x="2" y="3" width="6" height="4" fill="#80e080"/><rect x="5" y="12" width="1.5" height="1.5" fill="#e85"/><rect x="6.5" y="12" width="1.5" height="1.5" fill="#ec3"/><rect x="10" y="1" width="1" height="18" fill="#333"/><rect x="14" y="1" width="1" height="18" fill="#333"/></svg>
<div class="t" id="f26" style="left:57px;top:307px;font-size:15px;color:#e8e8e8;transform:scaleX(0.9180);transform-origin:0 0;">CPUシステム設定</div>
<svg class="a" style="left:12px;top:330px;" width="12" height="12" viewBox="0 0 12 12"><rect x="0.5" y="0.5" width="10" height="10.5" fill="#f2f2f2" stroke="#a8a8a8"/><rect x="1.2" y="1.2" width="8.6" height="9" fill="none" stroke="#fff" stroke-width="0.8"/><path d="M2.5 6h6" stroke="#34508e" stroke-width="1.3"/></svg>
<div class="a" style="left:24px;top:336px;width:7px;height:1px;background:repeating-linear-gradient(to right,#8a93a3 0 1px,transparent 1px 2px)"></div>
<svg class="a" style="left:31px;top:325px;" width="20" height="20" viewBox="0 0 20 20"><rect x="8" y="1" width="10" height="12" fill="#eee" stroke="#999"/><rect x="5" y="3" width="10" height="12" fill="#f4f4f4" stroke="#999"/><rect x="0" y="10" width="20" height="9" fill="#a8e0a0"/><path d="M2 12.5h3M5 10.5v4M7 10.5v4M7 12.5h2M11 12.5h2" stroke="#444" stroke-width="1" fill="none"/><circle cx="10" cy="12.5" r="1.3" stroke="#444" fill="none"/><path d="M2 16.5h3M5 14.5v4M7 14.5v4M7 16.5h2M11 16.5h2" stroke="#444" stroke-width="1" fill="none"/><circle cx="10" cy="16.5" r="1.3" stroke="#444" fill="none"/></svg>
<div class="t" id="f27" style="left:57px;top:327px;font-size:15px;color:#e8e8e8;transform:scaleX(0.9776);transform-origin:0 0;">プログラム:FB</div>
<svg class="a" style="left:36px;top:350px;" width="12" height="12" viewBox="0 0 12 12"><rect x="0.5" y="0.5" width="10" height="10.5" fill="#f2f2f2" stroke="#a8a8a8"/><rect x="1.2" y="1.2" width="8.6" height="9" fill="none" stroke="#fff" stroke-width="0.8"/><path d="M2.5 6h6" stroke="#34508e" stroke-width="1.3"/></svg>
<div class="a" style="left:48px;top:356px;width:7px;height:1px;background:repeating-linear-gradient(to right,#8a93a3 0 1px,transparent 1px 2px)"></div>
<svg class="a" style="left:56px;top:345px;" width="20" height="20" viewBox="0 0 20 20"><path d="M1.5 4.5q0-1 1-1h4l1.5 1.5h9q1 0 1 1V17q0 1-1 1H2.5q-1 0-1-1z" fill="#f2b01e"/><path d="M1.5 7h17v10q0 1-1 1H2.5q-1 0-1-1z" fill="#ffd98a"/></svg>
<div class="t" id="f28" style="left:81px;top:347px;font-size:15px;color:#e8e8e8;transform:scaleX(0.9867);transform-origin:0 0;">毎スキャンモジュール</div>
<svg class="a" style="left:60px;top:370px;" width="12" height="12" viewBox="0 0 12 12"><rect x="0.5" y="0.5" width="10" height="10.5" fill="#f2f2f2" stroke="#a8a8a8"/><rect x="1.2" y="1.2" width="8.6" height="9" fill="none" stroke="#fff" stroke-width="0.8"/><path d="M2.5 6h6" stroke="#34508e" stroke-width="1.3"/><path d="M5.5 3v6" stroke="#34508e" stroke-width="1.3"/></svg>
<div class="a" style="left:72px;top:376px;width:8px;height:1px;background:repeating-linear-gradient(to right,#8a93a3 0 1px,transparent 1px 2px)"></div>
<svg class="a" style="left:80px;top:365px;" width="20" height="20" viewBox="0 0 20 20"><path d="M2.5 1.5H13L16.5 5.5V18.5H2.5Z" fill="#fff" stroke="#999" stroke-width="1.2"/><path d="M13 1.5V5.5H16.5" fill="none" stroke="#999" stroke-width="1"/><path d="M3 8h3M6 6v4M8 6v4M8 8h2M12 8h2" stroke="#444" stroke-width="1" fill="none"/><circle cx="11" cy="8" r="1.3" stroke="#444" fill="none"/><path d="M3 13h3M6 11v4M8 11v4M8 13h2M12 13h2" stroke="#444" stroke-width="1" fill="none"/><circle cx="11" cy="13" r="1.3" stroke="#444" fill="none"/></svg>
<div class="t" id="f29" style="left:104px;top:367px;font-size:15px;color:#e8e8e8;font-family:Liberation Mono;transform:scaleX(0.7944);transform-origin:0 0;">Main</div>
<div class="a" style="left:41px;top:396px;width:14px;height:1px;background:repeating-linear-gradient(to right,#8a93a3 0 1px,transparent 1px 2px)"></div>
<svg class="a" style="left:56px;top:385px;" width="20" height="20" viewBox="0 0 20 20"><path d="M1.5 4.5q0-1 1-1h4l1.5 1.5h9q1 0 1 1V17q0 1-1 1H2.5q-1 0-1-1z" fill="#f2b01e"/><path d="M1.5 7h17v10q0 1-1 1H2.5q-1 0-1-1z" fill="#ffd98a"/></svg>
<div class="t" id="f30" style="left:81px;top:387px;font-size:15px;color:#e8e8e8;transform:scaleX(0.9875);transform-origin:0 0;">初期化モジュール</div>
<div class="a" style="left:41px;top:416px;width:14px;height:1px;background:repeating-linear-gradient(to right,#8a93a3 0 1px,transparent 1px 2px)"></div>
<svg class="a" style="left:56px;top:405px;" width="20" height="20" viewBox="0 0 20 20"><path d="M1.5 4.5q0-1 1-1h4l1.5 1.5h9q1 0 1 1V17q0 1-1 1H2.5q-1 0-1-1z" fill="#f2b01e"/><path d="M1.5 7h17v10q0 1-1 1H2.5q-1 0-1-1z" fill="#ffd98a"/></svg>
<div class="t" id="f31" style="left:81px;top:407px;font-size:15px;color:#e8e8e8;transform:scaleX(0.9810);transform-origin:0 0;">待機モジュール</div>
<div class="a" style="left:41px;top:436px;width:14px;height:1px;background:repeating-linear-gradient(to right,#8a93a3 0 1px,transparent 1px 2px)"></div>
<svg class="a" style="left:56px;top:425px;" width="20" height="20" viewBox="0 0 20 20"><path d="M1.5 4.5q0-1 1-1h4l1.5 1.5h9q1 0 1 1V17q0 1-1 1H2.5q-1 0-1-1z" fill="#f2b01e"/><path d="M1.5 7h17v10q0 1-1 1H2.5q-1 0-1-1z" fill="#ffd98a"/></svg>
<div class="t" id="f32" style="left:81px;top:427px;font-size:15px;color:#e8e8e8;transform:scaleX(0.9875);transform-origin:0 0;">定周期モジュール</div>
<div class="a" style="left:41px;top:456px;width:14px;height:1px;background:repeating-linear-gradient(to right,#8a93a3 0 1px,transparent 1px 2px)"></div>
<svg class="a" style="left:56px;top:445px;" width="20" height="20" viewBox="0 0 20 20"><path d="M1.5 4.5q0-1 1-1h4l1.5 1.5h9q1 0 1 1V17q0 1-1 1H2.5q-1 0-1-1z" fill="#f2b01e"/><path d="M1.5 7h17v10q0 1-1 1H2.5q-1 0-1-1z" fill="#ffd98a"/></svg>
<div class="t" id="f33" style="left:81px;top:447px;font-size:15px;color:#e8e8e8;transform:scaleX(0.9889);transform-origin:0 0;">ユニット間同期モジュール</div>
<svg class="a" style="left:12px;top:470px;" width="12" height="12" viewBox="0 0 12 12"><rect x="0.5" y="0.5" width="10" height="10.5" fill="#f2f2f2" stroke="#a8a8a8"/><rect x="1.2" y="1.2" width="8.6" height="9" fill="none" stroke="#fff" stroke-width="0.8"/><path d="M2.5 6h6" stroke="#34508e" stroke-width="1.3"/></svg>
<div class="a" style="left:24px;top:476px;width:7px;height:1px;background:repeating-linear-gradient(to right,#8a93a3 0 1px,transparent 1px 2px)"></div>
<svg class="a" style="left:31px;top:465px;" width="20" height="20" viewBox="0 0 20 20"><path d="M14 4.5L17.5 1H19.5V15.5L14 19.5Z" fill="#f4f4f4" stroke="#7a7a7a" stroke-width="0.9"/><path d="M15.8 4v13M17.6 3v12" stroke="#9a9a9a" stroke-width="0.8"/><path d="M1 4.5L5 0.8H17.5L14 4.5Z" fill="#8ab4ea"/><rect x="1" y="4.5" width="13" height="15" fill="#fff" stroke="#555" stroke-width="1"/><path d="M2 12h3M5 10v4M7 10v4M7 12h2M11 12h2" stroke="#444" stroke-width="1" fill="none"/><circle cx="10" cy="12" r="1.3" stroke="#444" fill="none"/></svg>
<div class="t" id="f34" style="left:57px;top:467px;font-size:15px;color:#e8e8e8;transform:scaleX(0.9818);transform-origin:0 0;">ファンクションブロック</div>
<svg class="a" style="left:36px;top:490px;" width="12" height="12" viewBox="0 0 12 12"><rect x="0.5" y="0.5" width="10" height="10.5" fill="#f2f2f2" stroke="#a8a8a8"/><rect x="1.2" y="1.2" width="8.6" height="9" fill="none" stroke="#fff" stroke-width="0.8"/><path d="M2.5 6h6" stroke="#34508e" stroke-width="1.3"/><path d="M5.5 3v6" stroke="#34508e" stroke-width="1.3"/></svg>
<div class="a" style="left:48px;top:496px;width:7px;height:1px;background:repeating-linear-gradient(to right,#8a93a3 0 1px,transparent 1px 2px)"></div>
<svg class="a" style="left:56px;top:485px;" width="20" height="20" viewBox="0 0 20 20"><rect x="2" y="2.5" width="15" height="16.5" fill="#fff" stroke="#666"/><rect x="2" y="1" width="15" height="6" fill="#8ab4ea"/><path d="M0 3h2M17 3h3" stroke="#888"/><path d="M3.5 13h3M6.5 11v4M8.5 11v4M8.5 13h2M12.5 13h2" stroke="#444" stroke-width="1" fill="none"/><circle cx="11.5" cy="13" r="1.3" stroke="#444" fill="none"/></svg>
<div class="t" id="f35" style="left:81px;top:487px;font-size:15px;color:#e8e8e8;font-family:Liberation Mono;transform:scaleX(0.8111);transform-origin:0 0;">INCREMENT</div>
<svg class="a" style="left:12px;top:510px;" width="12" height="12" viewBox="0 0 12 12"><rect x="0.5" y="0.5" width="10" height="10.5" fill="#f2f2f2" stroke="#a8a8a8"/><rect x="1.2" y="1.2" width="8.6" height="9" fill="none" stroke="#fff" stroke-width="0.8"/><path d="M2.5 6h6" stroke="#34508e" stroke-width="1.3"/></svg>
<div class="a" style="left:24px;top:516px;width:7px;height:1px;background:repeating-linear-gradient(to right,#8a93a3 0 1px,transparent 1px 2px)"></div>
<svg class="a" style="left:31px;top:505px;" width="20" height="20" viewBox="0 0 20 20"><path d="M14 4.5L17.5 1H19.5V15.5L14 19.5Z" fill="#f4f4f4" stroke="#7a7a7a" stroke-width="0.9"/><path d="M15.8 4v13M17.6 3v12" stroke="#9a9a9a" stroke-width="0.8"/><path d="M1 4.5L5 0.8H17.5L14 4.5Z" fill="#4caa68"/><rect x="1" y="4.5" width="13" height="15" fill="#fff" stroke="#555" stroke-width="1"/><path d="M2 12h3M5 10v4M7 10v4M7 12h2M11 12h2" stroke="#444" stroke-width="1" fill="none"/><circle cx="10" cy="12" r="1.3" stroke="#444" fill="none"/></svg>
<div class="t" id="f36" style="left:57px;top:507px;font-size:15px;color:#e8e8e8;transform:scaleX(0.9489);transform-origin:0 0;">マクロ</div>
<div class="a" style="left:41px;top:536px;width:14px;height:1px;background:repeating-linear-gradient(to right,#8a93a3 0 1px,transparent 1px 2px)"></div>
<svg class="a" style="left:56px;top:525px;" width="20" height="20" viewBox="0 0 20 20"><path d="M1.5 4q0-1 1-1h5l1.5 1.5h8q1 0 1 1V18H1.5z" fill="#8ed6a0"/><path d="M1.5 6.5h17V18H1.5z" fill="#a8e6b8"/><path d="M7 5.5h6v4.5H8.5v4" stroke="#2a7ed0" stroke-width="1.6" fill="none"/><path d="M5.5 13.5h6l-3 3.5z" fill="#2a7ed0"/></svg>
<div class="t" id="f37" style="left:81px;top:527px;font-size:15px;color:#e8e8e8;transform:scaleX(0.9827);transform-origin:0 0;">サブルーチン型マクロ</div>
<div class="a" style="left:41px;top:556px;width:14px;height:1px;background:repeating-linear-gradient(to right,#8a93a3 0 1px,transparent 1px 2px)"></div>
<svg class="a" style="left:56px;top:545px;" width="20" height="20" viewBox="0 0 20 20"><path d="M1.5 4q0-1 1-1h5l1.5 1.5h8q1 0 1 1V18H1.5z" fill="#8ed6a0"/><path d="M1.5 6.5h17V18H1.5z" fill="#a8e6b8"/><path d="M6 17v-5.5h7" stroke="#2a7ed0" stroke-width="1.6" fill="none"/><path d="M12.5 8l4 3.5-4 3.5z" fill="#2a7ed0"/></svg>
<div class="t" id="f38" style="left:81px;top:547px;font-size:15px;color:#e8e8e8;transform:scaleX(0.9833);transform-origin:0 0;">自己保持型マクロ</div>
<div class="a" style="left:17px;top:576px;width:14px;height:1px;background:repeating-linear-gradient(to right,#8a93a3 0 1px,transparent 1px 2px)"></div>
<svg class="a" style="left:31px;top:565px;" width="20" height="20" viewBox="0 0 20 20"><rect x="1" y="1" width="18" height="14" fill="#ddd"/><path d="M1 5h18M1 9h18M1 13h18M5 1v14M10 1v14M15 1v14" stroke="#888"/><text x="10" y="19.5" font-size="6" text-anchor="middle" fill="#fff" font-family="Liberation Sans" font-weight="bold">INIT</text></svg>
<div class="t" id="f39" style="left:57px;top:567px;font-size:15px;color:#e8e8e8;transform:scaleX(0.9867);transform-origin:0 0;">デバイス初期値</div>
<svg class="a" style="left:12px;top:590px;" width="12" height="12" viewBox="0 0 12 12"><rect x="0.5" y="0.5" width="10" height="10.5" fill="#f2f2f2" stroke="#a8a8a8"/><rect x="1.2" y="1.2" width="8.6" height="9" fill="none" stroke="#fff" stroke-width="0.8"/><path d="M2.5 6h6" stroke="#34508e" stroke-width="1.3"/></svg>
<div class="a" style="left:24px;top:596px;width:7px;height:1px;background:repeating-linear-gradient(to right,#8a93a3 0 1px,transparent 1px 2px)"></div>
<svg class="a" style="left:31px;top:585px;" width="20" height="20" viewBox="0 0 20 20"><rect x="8" y="1" width="10" height="13" fill="#eee" stroke="#999"/><rect x="5" y="4" width="10" height="13" fill="#f4f4f4" stroke="#999"/><rect x="2" y="7" width="10" height="12" fill="#fff" stroke="#999"/><text x="6.5" y="16" font-size="7" text-anchor="middle" fill="#3d84d4" font-weight="bold" font-family="Liberation Sans">F</text></svg>
<div class="t" id="f40" style="left:57px;top:587px;font-size:15px;color:#e8e8e8;transform:scaleX(0.9900);transform-origin:0 0;">ファイルレジスタ設定</div>
<div class="a" style="left:41px;top:616px;width:14px;height:1px;background:repeating-linear-gradient(to right,#8a93a3 0 1px,transparent 1px 2px)"></div>
<svg class="a" style="left:56px;top:605px;" width="20" height="20" viewBox="0 0 20 20"><path d="M1.5 4.5q0-1 1-1h4l1.5 1.5h9q1 0 1 1V17q0 1-1 1H2.5q-1 0-1-1z" fill="#f2b01e"/><path d="M1.5 7h17v10q0 1-1 1H2.5q-1 0-1-1z" fill="#ffd98a"/></svg>
<div class="t" id="f41" style="left:81px;top:607px;font-size:15px;color:#e8e8e8;transform:scaleX(1.0058);transform-origin:0 0;">0:メモリカード</div>
<div class="a" style="left:41px;top:636px;width:14px;height:1px;background:repeating-linear-gradient(to right,#8a93a3 0 1px,transparent 1px 2px)"></div>
<svg class="a" style="left:56px;top:625px;" width="20" height="20" viewBox="0 0 20 20"><path d="M1.5 4.5q0-1 1-1h4l1.5 1.5h9q1 0 1 1V17q0 1-1 1H2.5q-1 0-1-1z" fill="#f2b01e"/><path d="M1.5 7h17v10q0 1-1 1H2.5q-1 0-1-1z" fill="#ffd98a"/></svg>
<div class="t" id="f42" style="left:81px;top:627px;font-size:15px;color:#e8e8e8;transform:scaleX(0.8989);transform-origin:0 0;">1:CPUメモリ</div>
<svg class="a" style="left:12px;top:650px;" width="12" height="12" viewBox="0 0 12 12"><rect x="0.5" y="0.5" width="10" height="10.5" fill="#f2f2f2" stroke="#a8a8a8"/><rect x="1.2" y="1.2" width="8.6" height="9" fill="none" stroke="#fff" stroke-width="0.8"/><path d="M2.5 6h6" stroke="#34508e" stroke-width="1.3"/><path d="M5.5 3v6" stroke="#34508e" stroke-width="1.3"/></svg>
<div class="a" style="left:24px;top:656px;width:7px;height:1px;background:repeating-linear-gradient(to right,#8a93a3 0 1px,transparent 1px 2px)"></div>
<svg class="a" style="left:31px;top:645px;" width="20" height="20" viewBox="0 0 20 20"><rect x="7" y="1" width="10" height="12" fill="#fff" stroke="#aaa"/><rect x="4" y="3" width="10" height="12" fill="#fff" stroke="#aaa"/><path d="M1 12h18v7H1z" fill="#f2b01e"/></svg>
<div class="t" id="f43" style="left:57px;top:647px;font-size:15px;color:#e8e8e8;transform:scaleX(0.9852);transform-origin:0 0;">ユーザドキュメント</div>
<svg class="a" style="left:205px;top:287px;" width="18" height="18" viewBox="0 0 18 18"><circle cx="9" cy="9" r="8.5" fill="#f0b424"/><rect x="7.8" y="3.5" width="2.4" height="7" fill="#fff"/><rect x="7.8" y="12" width="2.4" height="2.4" fill="#fff"/></svg>
<div class="a" style="left:2px;top:804px;width:285px;height:3px;background:#fff"></div>
<div class="a" style="left:143px;top:807px;width:144px;height:1.5px;background:#8a8a8a"></div>
<div class="a" style="left:4px;top:807px;width:63px;height:23px;background:#a8a8a8"></div>
<div class="a" style="left:66px;top:807px;width:77px;height:23px;background:#f0f0f0;border:1px solid #909090;border-top:none"></div>
<div class="t" id="f44" style="left:8px;top:810px;font-size:16px;transform:scaleX(0.6188);transform-origin:0 0;">ライブラリ</div>
<div class="t" id="f45" style="left:72px;top:810px;font-size:16px;transform:scaleX(0.6562);transform-origin:0 0;">プロジェクト</div>
<div class="t" id="f46" style="left:6px;top:837px;font-size:18px;color:#222;transform:scaleX(0.5741);transform-origin:0 0;">レディ</div>
<svg class="a" style="left:1229px;top:841px;" width="21" height="12" viewBox="0 0 21 12"><circle cx="2.5" cy="6" r="2.5" fill="#444"/><path d="M2 6h16" stroke="#444" stroke-width="1.5"/><path d="M16 3l4 3-4 3z" fill="#444"/><path d="M6 6l3-4h3M9 6l3 4h2" stroke="#444" stroke-width="1.3" fill="none"/><circle cx="12" cy="2" r="1.5" fill="#444"/><rect x="13" y="9" width="3" height="3" fill="#444"/></svg>
<div class="t" id="f47" style="left:1253px;top:840px;font-size:15px;color:#222;transform:scaleX(0.8387);transform-origin:0 0;">USB</div>
<div class="a" style="left:1296px;top:844px;width:2px;height:2px;background:#a0a0a0"></div>
<div class="a" style="left:1291px;top:849px;width:2px;height:2px;background:#a0a0a0"></div>
<div class="a" style="left:1296px;top:849px;width:2px;height:2px;background:#a0a0a0"></div>
<div class="a" style="left:1286px;top:854px;width:2px;height:2px;background:#a0a0a0"></div>
<div class="a" style="left:1291px;top:854px;width:2px;height:2px;background:#a0a0a0"></div>
<div class="a" style="left:1296px;top:854px;width:2px;height:2px;background:#a0a0a0"></div>
<div class="a" style="left:291px;top:136px;width:143px;height:27px;background:#f0f0f0;border:1px solid #c8c8c8;border-bottom:none"></div>
<div class="t" id="f48" style="left:297px;top:140.5px;font-size:16px;transform:scaleX(0.8632);transform-origin:0 0;">INCREMENT</div>
<svg class="a" style="left:414px;top:145px;" width="11" height="11" viewBox="0 0 11 11"><path d="M1 1L10 10M10 1L1 10" stroke="#000" stroke-width="2.2"/></svg>
<div class="a" style="left:434px;top:136px;width:92px;height:26px;background:#a3a3a3"></div>
<div class="t" id="f49" style="left:441px;top:140.5px;font-size:16px;transform:scaleX(0.8143);transform-origin:0 0;">Main</div>
<svg class="a" style="left:505px;top:145px;" width="11" height="11" viewBox="0 0 11 11"><path d="M1 1L10 10M10 1L1 10" stroke="#000" stroke-width="2.2"/></svg>
<svg class="a" style="left:1287px;top:154px;" width="10" height="5" viewBox="0 0 10 5"><path d="M0 0H10L5 5Z" fill="#000"/></svg>
<div class="a" style="left:434px;top:162px;width:868px;height:1px;background:#b8b8b8"></div>
<div class="a" style="left:291px;top:163px;width:991px;height:2px;background:#2a3f66"></div>
<div class="a" style="left:1282px;top:165px;width:19px;height:20px;background:#8c8c8c"></div>
<div class="a" style="left:1286px;top:174px;width:12px;height:2.5px;background:#fff"></div>
<div class="a" style="left:1279px;top:163px;width:3px;height:200px;background:#fafafa"></div>
<div class="a" style="left:1282px;top:163px;width:20px;height:2px;background:#fafafa"></div>
<div class="a" style="left:291px;top:165px;width:988px;height:196px;background:#f3f3f3"></div>
<div class="a" style="left:356px;top:356px;width:923px;height:5px;background:#fbfbfb"></div>
<div class="a" style="left:356px;top:165px;width:923px;height:1px;background:#fafafa"></div>
<div class="a" style="left:291px;top:165px;width:65px;height:196px;background:#33476a"></div>
<div class="a" style="left:293px;top:165px;width:63px;height:28px;background:#3d97fb"></div>
<div class="t" id="f50" style="left:309px;top:170px;font-size:15px;color:#fff;transform:scaleX(1.0000);transform-origin:0 0;">引数</div>
<div class="a" style="left:293px;top:193px;width:63px;height:27px;background:#f4f4f4"></div>
<div class="t" id="f51" style="left:309px;top:198px;font-size:15px;color:#000;transform:scaleX(1.0000);transform-origin:0 0;">変数</div>
<div class="a" style="left:367px;top:176px;width:866px;height:81px;background:#fff"></div>
<div class="a" style="left:367px;top:176px;width:866px;height:22px;background:#f0f0f0;border:1px solid #a0a0a0;border-bottom:2px solid #a8a8a8"></div>
<div class="t" id="f52" style="left:439.5px;top:178.5px;font-size:15px;transform:scaleX(0.9778);transform-origin:0 0;">引数名</div>
<div class="a" style="left:555px;top:176px;width:1px;height:22px;background:#a0a0a0"></div>
<div class="t" id="f53" style="left:559.5px;top:178.5px;font-size:15px;transform:scaleX(0.8467);transform-origin:0 0;">引数タイプ</div>
<div class="a" style="left:630px;top:176px;width:1px;height:22px;background:#a0a0a0"></div>
<div class="t" id="f54" style="left:656px;top:178.5px;font-size:15px;transform:scaleX(0.8701);transform-origin:0 0;">データ型/ユニット種類</div>
<div class="a" style="left:817px;top:176px;width:1px;height:22px;background:#a0a0a0"></div>
<div class="t" id="f55" style="left:845.5px;top:178.5px;font-size:15px;transform:scaleX(0.9778);transform-origin:0 0;">初期値</div>
<div class="a" style="left:917px;top:176px;width:1px;height:22px;background:#a0a0a0"></div>
<div class="t" id="f56" style="left:934px;top:178.5px;font-size:15px;transform:scaleX(0.9667);transform-origin:0 0;">保持</div>
<div class="a" style="left:980px;top:176px;width:1px;height:22px;background:#a0a0a0"></div>
<div class="t" id="f57" style="left:989px;top:178.5px;font-size:15px;transform:scaleX(1.0000);transform-origin:0 0;">非公開</div>
<div class="a" style="left:1042px;top:176px;width:1px;height:22px;background:#a0a0a0"></div>
<div class="t" id="f58" style="left:1142px;top:178.5px;font-size:15px;transform:scaleX(0.7206);transform-origin:0 0;">コメント1</div>
<div class="a" style="left:368px;top:198px;width:187px;height:18px;background:#0a78d7"></div>
<div class="a" style="left:817px;top:198px;width:225px;height:18px;background:#dcdcdc"></div>
<div class="a" style="left:630px;top:237px;width:602px;height:19px;background:#dcdcdc"></div>
<div class="a" style="left:368px;top:256px;width:864px;height:2px;background:#ececec"></div>
<div class="a" style="left:368px;top:216px;width:864px;height:1px;background:#f0f0f0"></div>
<div class="a" style="left:368px;top:236px;width:864px;height:1px;background:#f0f0f0"></div>
<div class="a" style="left:555px;top:198px;width:1px;height:58px;background:#ececec"></div>
<div class="a" style="left:630px;top:198px;width:1px;height:58px;background:#ececec"></div>
<div class="a" style="left:817px;top:198px;width:1px;height:58px;background:#ececec"></div>
<div class="a" style="left:917px;top:198px;width:1px;height:58px;background:#ececec"></div>
<div class="a" style="left:980px;top:198px;width:1px;height:58px;background:#ececec"></div>
<div class="a" style="left:1042px;top:198px;width:1px;height:58px;background:#ececec"></div>
<div class="t" id="f59" style="left:371px;top:200px;font-size:15px;color:#fff;transform:scaleX(1.0000);transform-origin:0 0;">現在値</div>
<div class="t" id="f60" style="left:371px;top:220px;font-size:15px;transform:scaleX(1.0000);transform-origin:0 0;">加算値</div>
<div class="t" id="f61" style="left:558px;top:199px;font-size:16px;transform:scaleX(0.9273);transform-origin:0 0;">IN-OUT</div>
<div class="t" id="f62" style="left:558px;top:219px;font-size:16px;transform:scaleX(0.8750);transform-origin:0 0;">IN</div>
<div class="t" id="f63" style="left:634px;top:199px;font-size:16px;transform:scaleX(0.8784);transform-origin:0 0;">UINT</div>
<div class="t" id="f64" style="left:634px;top:219px;font-size:16px;transform:scaleX(0.8784);transform-origin:0 0;">UINT</div>
<div class="a" style="left:941px;top:199px;width:13px;height:14px;background:#fff;border:1px solid #a0a0a0"></div>
<div class="a" style="left:1004px;top:199px;width:13px;height:14px;background:#fff;border:1px solid #a0a0a0"></div>
<div class="a" style="left:941px;top:219px;width:13px;height:14px;background:#fff;border:1px solid #a0a0a0"></div>
<div class="a" style="left:1004px;top:219px;width:13px;height:14px;background:#fff;border:1px solid #a0a0a0"></div>
<div class="a" style="left:941px;top:239px;width:13px;height:14px;background:#fff;border:1px solid #a0a0a0"></div>
<div class="a" style="left:1004px;top:239px;width:13px;height:14px;background:#fff;border:1px solid #a0a0a0"></div>
<div class="a" style="left:367px;top:258px;width:866px;height:71px;background:#808080"></div>
<div class="a" style="left:367px;top:177px;width:1px;height:151px;background:#a0a0a0"></div>
<div class="a" style="left:368px;top:329px;width:864px;height:1px;background:#fff"></div>
<div class="a" style="left:367px;top:330px;width:866px;height:20px;background:#f0f0f0"></div>
<svg class="a" style="left:373px;top:334px;" width="8" height="11" viewBox="0 0 8 11"><path d="M6 1L1.5 5.5L6 10" stroke="#555" stroke-width="2" fill="none"/></svg>
<div class="a" style="left:388px;top:331px;width:54px;height:18px;background:#c8c8c8"></div>
<svg class="a" style="left:1220px;top:334px;" width="8" height="11" viewBox="0 0 8 11"><path d="M2 1L6.5 5.5L2 10" stroke="#555" stroke-width="2" fill="none"/></svg>
<svg class="a" style="left:1248px;top:181px;" width="14" height="16" viewBox="0 0 14 16"><path d="M7 0L14 7H10V15H4V7H0Z" fill="#a8a8a8"/></svg>
<svg class="a" style="left:1248px;top:216px;" width="14" height="16" viewBox="0 0 14 16"><path d="M7 16L14 9H10V1H4V9H0Z" fill="#3a82d0"/></svg>
<svg class="a" style="left:1246px;top:250px;" width="18" height="16" viewBox="0 0 18 16"><path d="M2 1L16 15M16 1L2 15" stroke="#e03a3a" stroke-width="2.2"/></svg>
<svg class="a" style="left:1245px;top:283px;" width="20" height="19" viewBox="0 0 20 19"><path d="M1.5 1.5H9L12.5 5.5V17.5H1.5Z" fill="#fff" stroke="#888" stroke-width="1.2"/><path d="M9 1.5V5.5H12.5" fill="none" stroke="#888" stroke-width="1"/><path d="M3 8h3M3 12h3" stroke="#555"/><circle cx="12" cy="11" r="4" fill="#d8f0fa" stroke="#444" stroke-width="1.5"/><path d="M15 14l4 4" stroke="#333" stroke-width="2"/></svg>
<svg class="a" style="left:1245px;top:316px;" width="20" height="19" viewBox="0 0 20 19"><rect x="1" y="2" width="13" height="15" fill="#fff" stroke="#888"/><rect x="1" y="1" width="13" height="4" fill="#8ab4ea"/><path d="M3 9h3M3 13h3" stroke="#555"/><rect x="9" y="11" width="10" height="8" rx="1" fill="#f2b01e"/><path d="M11 11v-2a3 3 0 0 1 6 0v2" stroke="#555" stroke-width="1.3" fill="none"/></svg>
<div class="a" style="left:1243px;top:347px;width:20px;height:4px;background:#d8d8d8"></div>
<div class="a" style="left:291px;top:372px;width:990px;height:446px;background:#fff"></div>
<div class="a" style="left:291px;top:372px;width:989px;height:14px;background:#d6e6fc;border:1px solid #a0a0a0"></div>
<div class="a" style="left:363px;top:372px;width:1px;height:14px;background:#a0a0a0"></div>
<div class="t" style="left:363px;top:373px;width:86px;text-align:center;font-size:12px;color:#222">1</div>
<div class="a" style="left:449px;top:372px;width:1px;height:14px;background:#a0a0a0"></div>
<div class="t" style="left:449px;top:373px;width:86px;text-align:center;font-size:12px;color:#222">2</div>
<div class="a" style="left:536px;top:372px;width:1px;height:14px;background:#a0a0a0"></div>
<div class="t" style="left:536px;top:373px;width:86px;text-align:center;font-size:12px;color:#222">3</div>
<div class="a" style="left:622px;top:372px;width:1px;height:14px;background:#a0a0a0"></div>
<div class="t" style="left:622px;top:373px;width:86px;text-align:center;font-size:12px;color:#222">4</div>
<div class="a" style="left:708px;top:372px;width:1px;height:14px;background:#a0a0a0"></div>
<div class="t" style="left:708px;top:373px;width:86px;text-align:center;font-size:12px;color:#222">5</div>
<div class="a" style="left:794px;top:372px;width:1px;height:14px;background:#a0a0a0"></div>
<div class="t" style="left:794px;top:373px;width:86px;text-align:center;font-size:12px;color:#222">6</div>
<div class="a" style="left:880px;top:372px;width:1px;height:14px;background:#a0a0a0"></div>
<div class="t" style="left:880px;top:373px;width:86px;text-align:center;font-size:12px;color:#222">7</div>
<div class="a" style="left:967px;top:372px;width:1px;height:14px;background:#a0a0a0"></div>
<div class="t" style="left:967px;top:373px;width:86px;text-align:center;font-size:12px;color:#222">8</div>
<div class="a" style="left:1053px;top:372px;width:1px;height:14px;background:#a0a0a0"></div>
<div class="t" style="left:1053px;top:373px;width:86px;text-align:center;font-size:12px;color:#222">9</div>
<div class="a" style="left:1139px;top:372px;width:1px;height:14px;background:#a0a0a0"></div>
<div class="t" style="left:1139px;top:373px;width:86px;text-align:center;font-size:12px;color:#222">10</div>
<div class="a" style="left:338px;top:372px;width:1px;height:14px;background:#a0a0a0"></div>
<div class="a" style="left:1226px;top:372px;width:1px;height:14px;background:#a0a0a0"></div>
<div class="a" style="left:363px;top:372px;width:87px;height:14px;border:2px solid #808080;border-bottom:none"></div>
<div class="a" style="left:291px;top:386px;width:47px;height:86px;background:#d6e6fc;border-right:1px solid #a0a0a0;border-bottom:1px solid #a0a0a0;border-left:1px solid #a0a0a0"></div>
<div class="a" style="left:338px;top:386px;width:24px;height:86px;background:#d6e6fc;border-bottom:1px solid #a0a0a0"></div>
<div class="t" id="f65" style="left:299.5px;top:423px;font-size:13px;color:#222;transform:scaleX(0.8333);transform-origin:0 0;">00001</div>
<div class="a" style="left:291px;top:472px;width:47px;height:86px;background:#d6e6fc;border-right:1px solid #a0a0a0;border-bottom:1px solid #a0a0a0;border-left:1px solid #a0a0a0"></div>
<div class="a" style="left:338px;top:472px;width:24px;height:86px;background:#d6e6fc;border-bottom:1px solid #a0a0a0"></div>
<div class="t" id="f66" style="left:299.5px;top:509px;font-size:13px;color:#222;transform:scaleX(0.8333);transform-origin:0 0;">00002</div>
<div class="a" style="left:291px;top:558px;width:47px;height:86px;background:#d6e6fc;border-right:1px solid #a0a0a0;border-bottom:1px solid #a0a0a0;border-left:1px solid #a0a0a0"></div>
<div class="a" style="left:338px;top:558px;width:24px;height:86px;background:#d6e6fc;border-bottom:1px solid #a0a0a0"></div>
<div class="t" id="f67" style="left:299.5px;top:596px;font-size:13px;color:#222;transform:scaleX(0.8333);transform-origin:0 0;">00003</div>
<div class="a" style="left:291px;top:645px;width:47px;height:86px;background:#d6e6fc;border-right:1px solid #a0a0a0;border-bottom:1px solid #a0a0a0;border-left:1px solid #a0a0a0"></div>
<div class="a" style="left:338px;top:645px;width:24px;height:86px;background:#d6e6fc;border-bottom:1px solid #a0a0a0"></div>
<div class="t" id="f68" style="left:299.5px;top:682px;font-size:13px;color:#222;transform:scaleX(0.8333);transform-origin:0 0;">00004</div>
<div class="a" style="left:291px;top:731px;width:47px;height:86px;background:#d6e6fc;border-right:1px solid #a0a0a0;border-bottom:1px solid #a0a0a0;border-left:1px solid #a0a0a0"></div>
<div class="a" style="left:338px;top:731px;width:24px;height:86px;background:#d6e6fc;border-bottom:1px solid #a0a0a0"></div>
<div class="t" id="f69" style="left:299.5px;top:768px;font-size:13px;color:#222;transform:scaleX(0.8333);transform-origin:0 0;">00005</div>
<div class="a" style="left:291px;top:386px;width:48px;height:86px;border:2px solid #808080"></div>
<div class="a" style="left:338px;top:386px;width:24px;height:86px;border:2px solid #808080;border-left:none"></div>
<div class="a" style="left:449px;top:386px;width:1px;height:431px;background:repeating-linear-gradient(to bottom,#c8c8c8 0 4px,transparent 4px 7px)"></div>
<div class="a" style="left:536px;top:386px;width:1px;height:431px;background:repeating-linear-gradient(to bottom,#c8c8c8 0 4px,transparent 4px 7px)"></div>
<div class="a" style="left:622px;top:386px;width:1px;height:431px;background:repeating-linear-gradient(to bottom,#c8c8c8 0 4px,transparent 4px 7px)"></div>
<div class="a" style="left:708px;top:386px;width:1px;height:431px;background:repeating-linear-gradient(to bottom,#c8c8c8 0 4px,transparent 4px 7px)"></div>
<div class="a" style="left:794px;top:386px;width:1px;height:431px;background:repeating-linear-gradient(to bottom,#c8c8c8 0 4px,transparent 4px 7px)"></div>
<div class="a" style="left:880px;top:386px;width:1px;height:431px;background:repeating-linear-gradient(to bottom,#c8c8c8 0 4px,transparent 4px 7px)"></div>
<div class="a" style="left:967px;top:386px;width:1px;height:431px;background:repeating-linear-gradient(to bottom,#c8c8c8 0 4px,transparent 4px 7px)"></div>
<div class="a" style="left:1053px;top:386px;width:1px;height:431px;background:repeating-linear-gradient(to bottom,#c8c8c8 0 4px,transparent 4px 7px)"></div>
<div class="a" style="left:1139px;top:386px;width:1px;height:431px;background:repeating-linear-gradient(to bottom,#c8c8c8 0 4px,transparent 4px 7px)"></div>
<div class="a" style="left:1226px;top:386px;width:1px;height:431px;background:repeating-linear-gradient(to bottom,#c8c8c8 0 4px,transparent 4px 7px)"></div>
<div class="a" style="left:363px;top:472px;width:863px;height:1px;background:repeating-linear-gradient(to right,#c8c8c8 0 4px,transparent 4px 7px)"></div>
<div class="a" style="left:363px;top:558px;width:863px;height:1px;background:repeating-linear-gradient(to right,#c8c8c8 0 4px,transparent 4px 7px)"></div>
<div class="a" style="left:363px;top:645px;width:863px;height:1px;background:repeating-linear-gradient(to right,#c8c8c8 0 4px,transparent 4px 7px)"></div>
<div class="a" style="left:363px;top:731px;width:863px;height:1px;background:repeating-linear-gradient(to right,#c8c8c8 0 4px,transparent 4px 7px)"></div>
<div class="a" style="left:363px;top:816px;width:863px;height:1px;background:repeating-linear-gradient(to right,#c8c8c8 0 4px,transparent 4px 7px)"></div>
<div class="a" style="left:361px;top:386px;width:2px;height:431px;background:#000"></div>
<div class="a" style="left:1226px;top:386px;width:2px;height:431px;background:#000"></div>
<div class="a" style="left:364px;top:386px;width:84px;height:85px;border:2px solid #b0f0a0"></div>
<div class="a" style="left:366px;top:425px;width:32px;height:1px;background:#2a7a2a"></div>
<div class="a" style="left:397px;top:416px;width:1.3px;height:18px;background:#2a7a2a"></div>
<div class="a" style="left:414.5px;top:416px;width:1.3px;height:18px;background:#2a7a2a"></div>
<div class="a" style="left:415px;top:425px;width:31px;height:1px;background:#2a7a2a"></div>
<div class="a" style="left:448px;top:425px;width:519px;height:1px;background:#333"></div>
<div class="t" id="f70" style="left:387px;top:405px;font-size:13.5px;color:#333;transform:scaleX(0.7400);transform-origin:0 0;">CR2002</div>
<div class="t" id="f71" style="left:373px;top:447px;font-size:11px;color:#108010;font-weight:bold;transform:scaleX(0.8462);transform-origin:0 0;">常時ON</div>
<div class="a" style="left:967px;top:425px;width:15px;height:1px;background:#2a7a2a"></div>
<div class="t" id="f72" style="left:991.5px;top:403px;font-size:13px;color:#9a1ae8;font-weight:bold;transform:scaleX(0.9487);transform-origin:0 0;">現在値</div>
<div class="t" id="f73" style="left:1000.5px;top:418.5px;font-size:13.5px;color:#2a7a2a;font-family:Liberation Mono;font-weight:bold;transform:scaleX(0.7708);transform-origin:0 0;">LDA</div>
<svg class="a" style="left:982px;top:415px;" width="6" height="20" viewBox="0 0 6 20"><path d="M5 0.5L1 10L5 19.5" stroke="#2a7a2a" stroke-width="1.3" fill="none"/></svg>
<svg class="a" style="left:1033px;top:415px;" width="6" height="20" viewBox="0 0 6 20"><path d="M1 0.5L5 10L1 19.5" stroke="#2a7a2a" stroke-width="1.3" fill="none"/></svg>
<div class="a" style="left:1038px;top:425px;width:31px;height:1px;background:#2a7a2a"></div>
<div class="t" id="f74" style="left:1077.5px;top:403px;font-size:13px;color:#9a1ae8;font-weight:bold;transform:scaleX(0.9231);transform-origin:0 0;">加算値</div>
<div class="t" id="f75" style="left:1086.5px;top:418.5px;font-size:13.5px;color:#2a7a2a;font-family:Liberation Mono;font-weight:bold;transform:scaleX(0.7708);transform-origin:0 0;">ADD</div>
<svg class="a" style="left:1068px;top:415px;" width="6" height="20" viewBox="0 0 6 20"><path d="M5 0.5L1 10L5 19.5" stroke="#2a7a2a" stroke-width="1.3" fill="none"/></svg>
<svg class="a" style="left:1119px;top:415px;" width="6" height="20" viewBox="0 0 6 20"><path d="M1 0.5L5 10L1 19.5" stroke="#2a7a2a" stroke-width="1.3" fill="none"/></svg>
<div class="a" style="left:1124px;top:425px;width:31px;height:1px;background:#2a7a2a"></div>
<div class="t" id="f76" style="left:1163.5px;top:403px;font-size:13px;color:#9a1ae8;font-weight:bold;transform:scaleX(0.9487);transform-origin:0 0;">現在値</div>
<div class="t" id="f77" style="left:1172.5px;top:418.5px;font-size:13.5px;color:#2a7a2a;font-family:Liberation Mono;font-weight:bold;transform:scaleX(0.7917);transform-origin:0 0;">STA</div>
<svg class="a" style="left:1154px;top:415px;" width="6" height="20" viewBox="0 0 6 20"><path d="M5 0.5L1 10L5 19.5" stroke="#2a7a2a" stroke-width="1.3" fill="none"/></svg>
<svg class="a" style="left:1205px;top:415px;" width="6" height="20" viewBox="0 0 6 20"><path d="M1 0.5L5 10L1 19.5" stroke="#2a7a2a" stroke-width="1.3" fill="none"/></svg>
<div class="a" style="left:1211px;top:425px;width:15px;height:1px;background:#2a7a2a"></div>
<div class="a" style="left:364px;top:512px;width:775px;height:1px;background:#333"></div>
<div class="a" style="left:1139px;top:512px;width:8px;height:1px;background:#2a7a2a"></div>
<div class="a" style="left:1146px;top:489px;width:75px;height:43px;border:1px solid #2a7a2a;border-width:1.3px"></div>
<div class="a" style="left:1152px;top:486px;width:31px;height:6px;background:#fff"></div>
<div class="t" id="f78" style="left:1158px;top:483.5px;font-size:13.5px;color:#2a7a2a;font-family:Liberation Mono;font-weight:bold;opacity:0.85;transform:scaleX(0.7708);transform-origin:0 0;">END</div>
<div class="a" style="left:1221px;top:512px;width:5px;height:1px;background:#2a7a2a"></div>
<div class="a" style="left:364px;top:598px;width:775px;height:1px;background:#333"></div>
<div class="a" style="left:1139px;top:598px;width:8px;height:1px;background:#2a7a2a"></div>
<div class="a" style="left:1146px;top:575px;width:75px;height:43px;border:1px solid #2a7a2a;border-width:1.3px"></div>
<div class="a" style="left:1152px;top:572px;width:38px;height:6px;background:#fff"></div>
<div class="t" id="f79" style="left:1158px;top:569.5px;font-size:13.5px;color:#2a7a2a;font-family:Liberation Mono;font-weight:bold;opacity:0.85;transform:scaleX(0.7812);transform-origin:0 0;">ENDH</div>
<div class="a" style="left:1221px;top:598px;width:5px;height:1px;background:#2a7a2a"></div>
<div class="a" style="left:291px;top:817px;width:989px;height:2px;background:#e0e0e0"></div>
<div class="a" style="left:291px;top:819px;width:989px;height:12px;background:#808080"></div>
<svg class="a" style="left:1280px;top:370px;" width="20" height="22" viewBox="0 0 20 22"><path d="M0 9.5h19" stroke="#333" stroke-width="1"/><path d="M0 12.2h19" stroke="#707070" stroke-width="1.6"/><path d="M10 2v7M10 13v7" stroke="#555" stroke-width="1.3"/><path d="M7 5l3-3 3 3M7 17l3 3 3-3" stroke="#444" stroke-width="1.3" fill="none"/></svg>
<div class="a" style="left:1279px;top:372px;width:1px;height:446px;background:#a8a8a8"></div>
<svg class="a" style="left:1286px;top:398px;" width="11" height="9" viewBox="0 0 11 9"><path d="M1 7.5L5.5 2L10 7.5" stroke="#c4c4c4" stroke-width="2" fill="none"/></svg>
<svg class="a" style="left:1285px;top:819px;" width="12" height="8" viewBox="0 0 12 8"><path d="M1 1L6 6L11 1" stroke="#c8c8c8" stroke-width="1.5" fill="none"/></svg>
<div class="a" style="left:0px;top:0px;width:1303px;height:1px;background:#1d3b2a"></div>
<div class="a" style="left:0px;top:0px;width:1px;height:861px;background:#444"></div>
<div class="a" style="left:1302px;top:0px;width:1px;height:861px;background:#444"></div>
<div class="a" style="left:0px;top:860px;width:1303px;height:1px;background:#444"></div>
</body></html>
